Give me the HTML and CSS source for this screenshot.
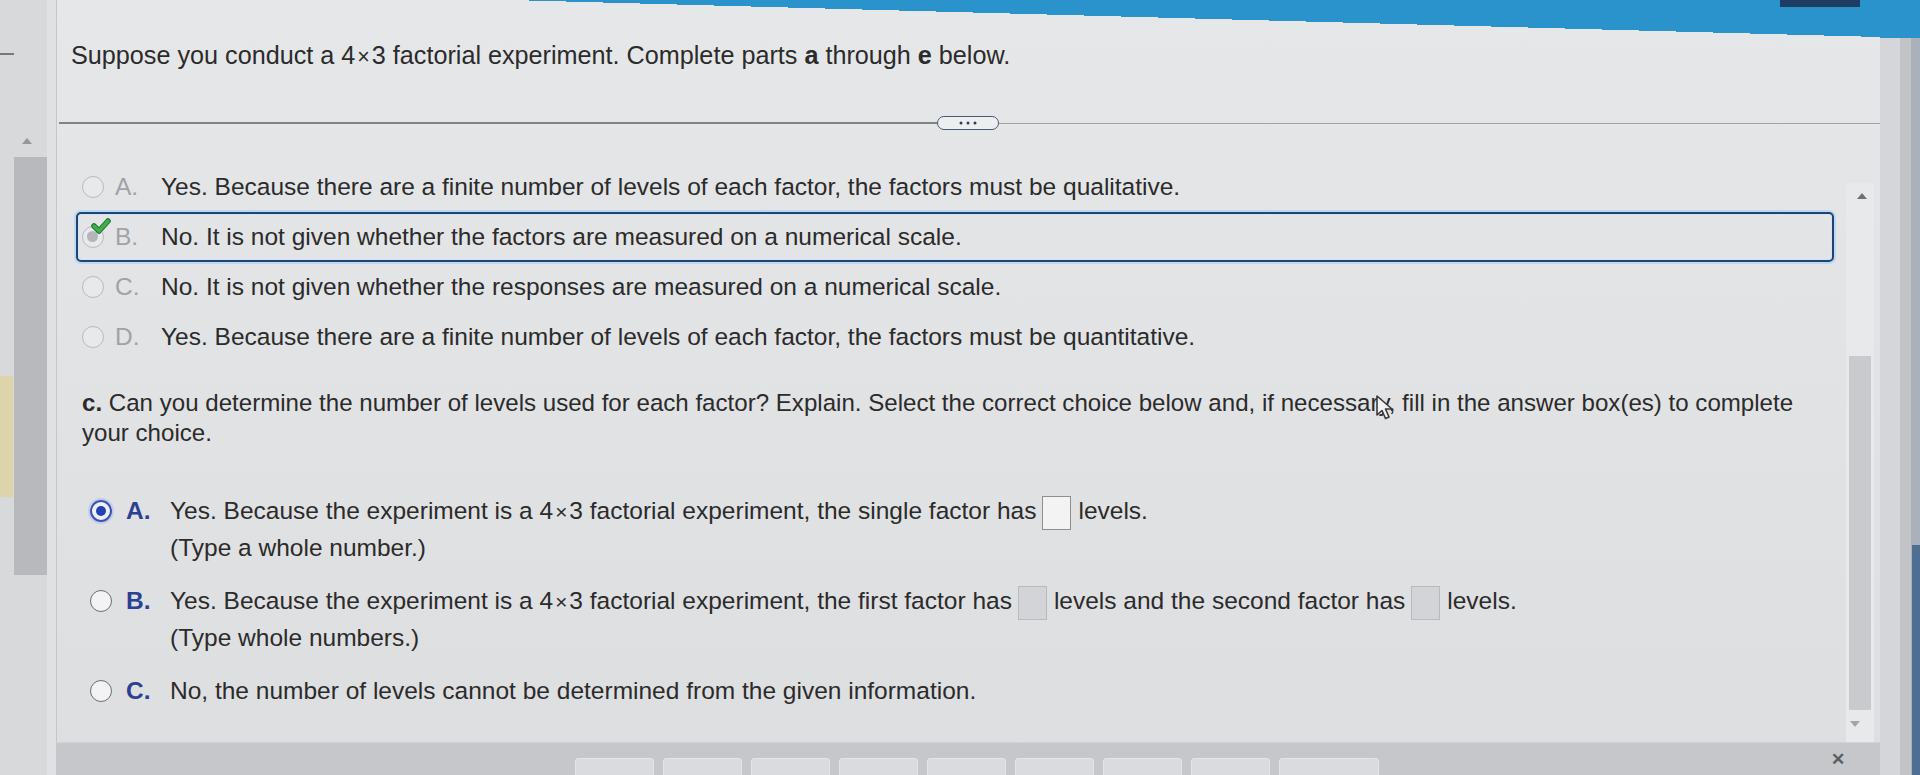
FILE: index.html
```html
<!DOCTYPE html>
<html lang="en">
<head>
<meta charset="utf-8">
<title>Factorial experiment</title>
<link rel="stylesheet" href="styles.css">
</head>
<body>
<div class="screen">
  <aside class="leftcol">
    <div class="lstrip">
      <div class="dash"></div>
      <div class="yellow"></div>
    </div>
    <div class="lscroll">
      <span class="arrow-up small"></span>
      <div class="lthumb"></div>
    </div>
  </aside>

  <main class="panel">
    <header class="title">Suppose you conduct a 4<span class="times">×</span>3 factorial experiment. Complete parts <b>a</b> through <b>e</b> below.</header>

    <div class="divider">
      <span class="line l"></span>
      <span class="more"><svg width="20" height="4" viewBox="0 0 20 4"><circle cx="3" cy="2" r="1.5" fill="#2c3e5c"/><circle cx="10" cy="2" r="1.5" fill="#2c3e5c"/><circle cx="17" cy="2" r="1.5" fill="#2c3e5c"/></svg></span>
      <span class="line r"></span>
    </div>

    <div class="scrollarea">
      <div class="content">
        <div class="opts-b">
          <div class="optb"><span class="radio faded"></span><span class="letter">A.</span><span class="text">Yes. Because there are a finite number of levels of each factor, the factors must be qualitative.</span></div>
          <div class="optb sel"><span class="radio faded on"><svg class="check" width="20" height="16" viewBox="0 0 20 16"><path d="M3 8 L8 13 L17 3" fill="none" stroke="#1f6e2c" stroke-width="5.5" stroke-linecap="round" stroke-linejoin="round"/><path d="M3 8 L8 13 L17 3" fill="none" stroke="#3bb04d" stroke-width="3.5" stroke-linecap="round" stroke-linejoin="round"/></svg></span><span class="letter">B.</span><span class="text">No. It is not given whether the factors are measured on a numerical scale.</span></div>
          <div class="optb"><span class="radio faded"></span><span class="letter">C.</span><span class="text">No. It is not given whether the responses are measured on a numerical scale.</span></div>
          <div class="optb"><span class="radio faded"></span><span class="letter">D.</span><span class="text">Yes. Because there are a finite number of levels of each factor, the factors must be quantitative.</span></div>
        </div>

        <p class="question"><b>c.</b> Can you determine the number of levels used for each factor? Explain. Select the correct choice below and, if necessar<span class="cur">y,<svg class="pointer" width="22" height="27" viewBox="0 0 22 27"><path d="M2 2 L2 21 L7 16.5 L10.5 24.5 L14 23 L10.5 15 L17 15 Z" fill="#f1f1f1" stroke="#3a3a3a" stroke-width="1.6" stroke-linejoin="round"/></svg></span> fill in the answer box(es) to complete<br>your choice.</p>

        <div class="opts-c">
          <div class="optc">
            <span class="radio blue on"></span>
            <span class="letter">A.</span>
            <div class="body">
              <div>Yes. Because the experiment is a 4<span class="times">×</span>3 factorial experiment, the single factor has<span class="box"></span>levels.</div>
              <div>(Type a whole number.)</div>
            </div>
          </div>
          <div class="optc">
            <span class="radio blue"></span>
            <span class="letter">B.</span>
            <div class="body">
              <div>Yes. Because the experiment is a 4<span class="times">×</span>3 factorial experiment, the first factor has<span class="box off"></span>levels and the second factor has<span class="box off"></span>levels.</div>
              <div>(Type whole numbers.)</div>
            </div>
          </div>
          <div class="optc">
            <span class="radio blue"></span>
            <span class="letter">C.</span>
            <div class="body">
              <div>No, the number of levels cannot be determined from the given information.</div>
            </div>
          </div>
        </div>
      </div>

      <div class="vscroll">
        <div class="track">
          <span class="arrow-up"></span>
          <div class="vthumb"></div>
          <span class="arrow-down"></span>
        </div>
      </div>
    </div>

    <footer class="tabbar">
      <span class="tab"></span><span class="tab"></span><span class="tab"></span><span class="tab"></span><span class="tab"></span><span class="tab"></span><span class="tab"></span><span class="tab"></span><span class="tab wide"></span>
      <span class="close">✕</span>
    </footer>
  </main>

  <aside class="rightcol">
    <div class="rc-top"></div>
    <div class="rc-body"></div>
  </aside>
</div>
</body>
</html>
```
FILE: styles.css
```css
* { box-sizing: border-box; margin: 0; padding: 0; }

html, body {
  width: 1920px;
  height: 775px;
  overflow: hidden;
}

body {
  font-family: "Liberation Sans", Arial, sans-serif;
  color: #2b2b2b;
  background: #d6d7d9;
}

.screen {
  display: flex;
  width: 1920px;
  height: 775px;
}

/* ---------- left column ---------- */
.leftcol {
  width: 56px;
  flex: none;
  display: flex;
  background: #d8d9db;
}

.lstrip {
  width: 14px;
  display: flex;
  flex-direction: column;
}

.dash {
  margin-top: 53px;
  height: 2px;
  width: 15px;
  background: #77787b;
}

.yellow {
  margin-top: 321px;
  height: 121px;
  width: 13px;
  background: #ddd4a9;
}

.lscroll {
  width: 42px;
  display: flex;
  flex-direction: column;
  align-items: flex-start;
  padding-top: 138px;
  background: linear-gradient(to right, #d8d9db 0 33px, #e0e1e3 33px);
}

.lscroll .arrow-up {
  margin-left: 8px;
}

.lthumb {
  margin-top: 13px;
  margin-left: 0;
  width: 33px;
  height: 418px;
  background: #b8b9bc;
}

.arrow-up, .arrow-down {
  display: block;
  width: 0;
  height: 0;
  border-left: 5px solid transparent;
  border-right: 5px solid transparent;
}

.arrow-up { border-bottom: 6px solid #6e7075; }
.arrow-up.small { border-bottom-color: #95979b; }
.arrow-down { border-top: 6px solid #a3a5a9; }

/* ---------- main panel ---------- */
.panel {
  flex: 1;
  display: flex;
  flex-direction: column;
  min-width: 0;
  box-shadow: inset 1px 0 #c5c6c9;
  background:
    linear-gradient(#1e3d62, #1e3d62) right 20px top / 80px 7px no-repeat,
    linear-gradient(to bottom left, #2a93cc 50%, transparent 50%) right top / 1370px 37px no-repeat,
    linear-gradient(#e6e7e9, #dddee0);
}

.title {
  height: 70px;
  padding: 40px 0 0 15px;
  font-size: 25.2px;
  line-height: 30px;
  white-space: nowrap;
}

.times {
  margin: 0 2px;
  font-size: 0.85em;
}

.divider {
  display: flex;
  align-items: center;
  height: 14px;
  margin-top: 46px;
  padding-left: 3px;
}

.divider .l {
  width: 878px;
  height: 2px;
  background: #818285;
}

.divider .r {
  flex: 1;
  height: 1px;
  background: #a2a3a6;
}

.more {
  width: 62px;
  height: 14px;
  flex: none;
  border: 1.5px solid #4b5b77;
  border-radius: 7px;
  background: #eceef0;
  display: flex;
  align-items: center;
  justify-content: center;
}

.scrollarea {
  flex: 1;
  display: flex;
  min-height: 0;
}

.content {
  flex: 1;
  min-width: 0;
  font-size: 24.5px;
}

/* ---------- radios ---------- */
.radio {
  position: relative;
  display: block;
  flex: none;
  width: 22px;
  height: 22px;
  border-radius: 50%;
}

.radio.faded {
  border: 1.5px solid #b9babd;
  background: #e8e9eb;
}

.radio.faded.on::after {
  content: "";
  position: absolute;
  left: 4px;
  top: 4px;
  width: 11px;
  height: 11px;
  border-radius: 50%;
  background: #b4b5b8;
}

.radio .check {
  position: absolute;
  left: 8px;
  top: -9px;
  z-index: 2;
}

.radio.blue {
  border: 1.5px solid #6a6e78;
  background: #f3f3f5;
}

.radio.blue.on {
  border: 2px solid #3a54b4;
  background: #eef1fa;
  box-shadow: 0 0 0 2px #c3cdec;
}

.radio.blue.on::after {
  content: "";
  position: absolute;
  left: 4px;
  top: 4px;
  width: 10px;
  height: 10px;
  border-radius: 50%;
  background: #2541b3;
}

/* ---------- part b options ---------- */
.opts-b {
  padding: 32px 6px 0 20px;
}

.optb {
  display: flex;
  align-items: center;
  height: 50px;
  padding-left: 4px;
  border: 2px solid transparent;
  border-radius: 5px;
  line-height: 30px;
  white-space: nowrap;
}

.optb.sel {
  border-color: #23426f;
  box-shadow: 0 0 0 2px #b7dbf2, inset 0 0 0 1px #cbe5f6;
}

.optb .letter {
  margin-left: 11px;
  width: 46px;
  flex: none;
  color: #a1a2a5;
}

/* ---------- question c ---------- */
.question {
  margin: 26px 0 0 26px;
  font-size: 24.1px;
  line-height: 30px;
  white-space: nowrap;
}

.cur {
  position: relative;
}

.pointer {
  position: absolute;
  left: -3px;
  top: 5px;
}

/* ---------- part c options ---------- */
.opts-c {
  margin-top: 45px;
  padding-left: 34px;
  display: flex;
  flex-direction: column;
  gap: 17px;
}

.optc {
  display: flex;
  align-items: flex-start;
  line-height: 36px;
  white-space: nowrap;
}

.optc .radio {
  margin-top: 7px;
}

.optc .letter {
  margin-left: 14px;
  width: 44px;
  flex: none;
  font-weight: bold;
  color: #2c3f92;
}

.box {
  display: inline-block;
  width: 29px;
  height: 34px;
  margin: 0 7px 0 6px;
  vertical-align: middle;
  border: 1px solid #8e8f93;
  background: #f3f3f4;
}

.box.off {
  border-color: #b9babe;
  background: #d3d4d7;
}

/* ---------- inner scrollbar ---------- */
.vscroll {
  width: 40px;
  flex: none;
  padding: 53px 0 0 6px;
}

.track {
  width: 28px;
  height: 100%;
  background: #e8e9eb;
  display: flex;
  flex-direction: column;
  align-items: center;
  padding-top: 10px;
}

.track .arrow-up {
  margin-left: 4px;
}

.vthumb {
  margin-top: 157px;
  width: 22px;
  height: 354px;
  background: #c9cacd;
}

.track .arrow-down {
  margin-top: 11px;
  margin-right: 10px;
}

/* ---------- bottom tab bar ---------- */
.tabbar {
  height: 33px;
  flex: none;
  display: flex;
  align-items: flex-end;
  gap: 9px;
  padding-left: 519px;
  background: #c5c7ca;
  border-top: 1px solid #d2d3d6;
}

.tab {
  display: block;
  width: 79px;
  height: 17px;
  background: #dadbde;
  border: 1px solid #e4e5e7;
  border-bottom: none;
  border-radius: 4px 4px 0 0;
}

.tab.wide { width: 100px; }

.close {
  margin-left: auto;
  margin-right: 35px;
  align-self: center;
  font-size: 17px;
  font-weight: bold;
  color: #5b5e63;
}

/* ---------- right column ---------- */
.rightcol {
  width: 40px;
  flex: none;
  display: flex;
  flex-direction: column;
}

.rc-top {
  height: 38px;
  background: #2a93cc;
}

.rc-body {
  flex: 1;
  background:
    linear-gradient(to right, transparent 32px, #4f6e94 32px) left bottom / 100% 230px no-repeat,
    linear-gradient(to right, #d5d6d9 0 20px, #c1c3c6 20px 31px, #aab1ba 31px);
}
```
